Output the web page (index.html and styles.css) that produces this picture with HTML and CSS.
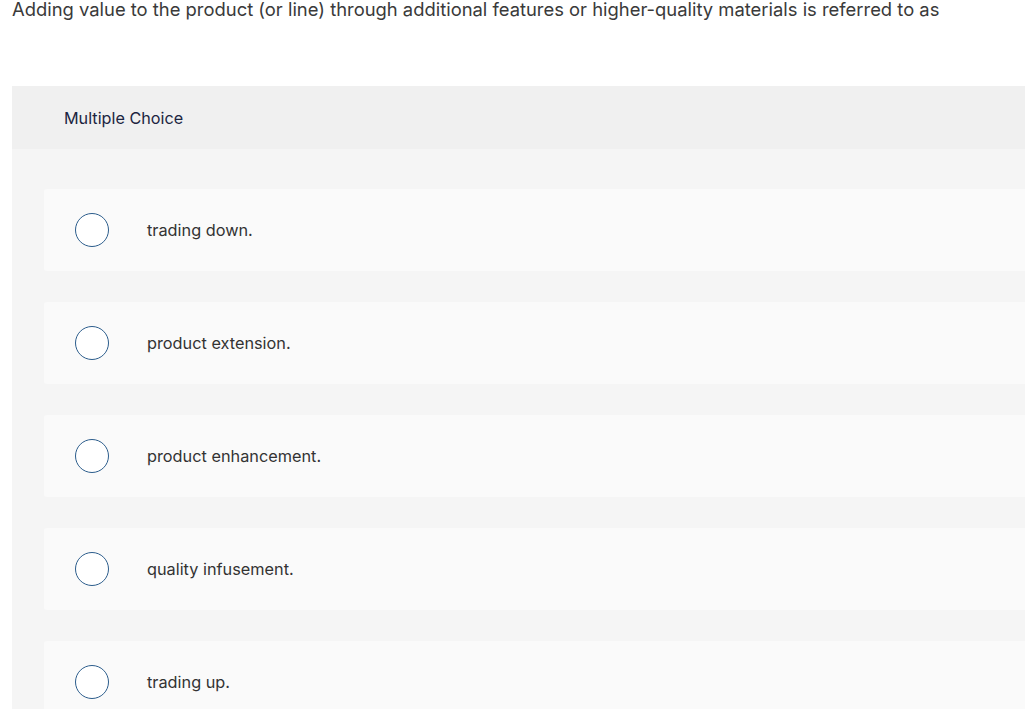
FILE: index.html
```html
<!DOCTYPE html>
<html>
<head>
<meta charset="utf-8">
<link rel="stylesheet" href="styles.css">
</head>
<body>
<div class="question">Adding value to the product (or line) through additional features or higher-quality materials is referred to as</div>
<div class="panel">
  <div class="panel-head">Multiple Choice</div>
  <div class="options">
    <div class="option"><span class="radio"></span><span class="label">trading down.</span></div>
    <div class="option"><span class="radio"></span><span class="label">product extension.</span></div>
    <div class="option"><span class="radio"></span><span class="label">product enhancement.</span></div>
    <div class="option"><span class="radio"></span><span class="label">quality infusement.</span></div>
    <div class="option"><span class="radio"></span><span class="label">trading up.</span></div>
  </div>
</div>
</body>
</html>
```
FILE: styles.css
```css
html, body {
  margin: 0;
  padding: 0;
  background: #ffffff;
  overflow: hidden;
  height: 709px;
}
body {
  font-family: Inter, "Open Sans", sans-serif;
  color: #333333;
}
.question {
  padding-left: 12px;
  font-size: 18.4px;
  line-height: 19px;
  white-space: nowrap;
  color: #3a3a3a;
}
.panel {
  margin-top: 67px;
  margin-left: 12px;
  width: 1040px;
  background: #f5f5f5;
}
.panel-head {
  height: 63px;
  background: #f0f0f0;
  display: flex;
  align-items: center;
  padding-left: 52px;
  font-size: 16.2px;
  color: #1c2541;
}
.options {
  padding: 40px 0 40px 32px;
  display: flex;
  flex-direction: column;
  gap: 31px;
}
.option {
  height: 82px;
  background: #fafafa;
  border-radius: 3px;
  display: flex;
  align-items: center;
  padding-left: 31px;
}
.radio {
  width: 32px;
  height: 32px;
  border: 1.5px solid #2c5d8c;
  border-radius: 50%;
  background: #ffffff;
  flex: none;
}
.label {
  margin-left: 38px;
  font-size: 16.3px;
  color: #333333;
}
```
